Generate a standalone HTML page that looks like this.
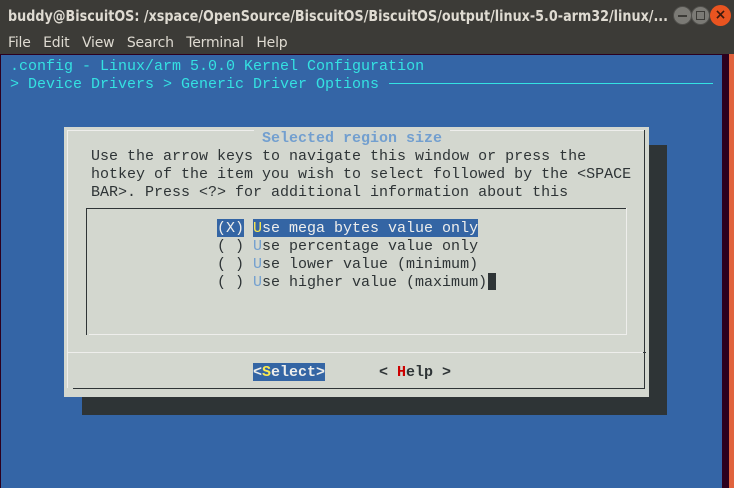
<!DOCTYPE html>
<html><head><meta charset="utf-8"><style>
*{margin:0;padding:0;box-sizing:border-box}
body{width:734px;height:488px;overflow:hidden;background:#3c3b37;position:relative;font-family:"Liberation Mono",monospace;}
.abs{position:absolute}
.t{position:absolute;font-size:15px;line-height:18px;white-space:pre;font-family:"Liberation Mono",monospace;margin-top:2px}
</style></head><body>
<div class="abs" style="left:0;top:0;width:734px;height:32px;background:#3c3b37"></div>
<svg class="abs" style="left:0;top:0" width="672" height="32"><text x="8" y="21" textLength="660" lengthAdjust="spacingAndGlyphs" font-family="DejaVu Sans, Liberation Sans, sans-serif" font-weight="bold" font-size="15" fill="#dfdbd2">buddy@BiscuitOS: /xspace/OpenSource/BiscuitOS/BiscuitOS/output/linux-5.0-arm32/linux/...</text></svg>
<div class="abs" style="left:673px;top:6px;width:19px;height:19px;border-radius:50%;background:#7b7a75;border:1px solid #4f4e4a"></div>
<div class="abs" style="left:678px;top:15px;width:9px;height:2px;background:#3c3b37"></div>
<div class="abs" style="left:691px;top:6px;width:19px;height:19px;border-radius:50%;background:#7b7a75;border:1px solid #4f4e4a"></div>
<div class="abs" style="left:696px;top:11px;width:9px;height:9px;border:1.5px solid #3c3b37"></div>
<div class="abs" style="left:710px;top:5px;width:21px;height:21px;border-radius:50%;background:#e95420;color:#3c1a0e;font:bold 14px 'DejaVu Sans',sans-serif;text-align:center;line-height:20px">×</div>
<div class="abs" style="left:8px;top:35px;font:14px 'DejaVu Sans','Liberation Sans',sans-serif;color:#dfdbd2;word-spacing:2px;letter-spacing:-0.2px;white-space:nowrap">File&nbsp; Edit&nbsp; View&nbsp; Search&nbsp; Terminal&nbsp; Help</div>
<div class="abs" style="left:0;top:54px;width:734px;height:434px;background:#2c001e"></div>
<div class="abs" style="left:1px;top:55px;width:721px;height:433px;background:#3465a6"></div>
<div class="abs" style="left:729px;top:54px;width:5px;height:434px;background:#e0633d"></div>
<div class="t" style="left:10px;top:56px;color:#34e2e2">.config - Linux/arm 5.0.0 Kernel Configuration</div>
<div class="t" style="left:10px;top:74px;color:#34e2e2">&gt; Device Drivers &gt; Generic Driver Options</div>
<div class="abs" style="left:389px;top:83px;width:324px;height:1px;background:#34e2e2"></div>
<div class="abs" style="left:82px;top:145px;width:585px;height:270px;background:#2e3436"></div>
<div class="abs" style="left:64px;top:127px;width:585px;height:270px;background:#d3d7cf"></div>
<div class="abs" style="left:67px;top:130px;width:578px;height:1px;background:#eeeeec"></div>
<div class="abs" style="left:67px;top:130px;width:1px;height:258px;background:#eeeeec"></div>
<div class="abs" style="left:644px;top:130px;width:1px;height:259px;background:#2e3436"></div>
<div class="abs" style="left:73px;top:388px;width:572px;height:1px;background:#2e3436"></div>
<div class="abs" style="left:254px;top:128px;width:196px;height:6px;background:#d3d7cf"></div>
<div class="t" style="left:262px;top:128px;color:#729fcf;font-weight:bold">Selected region size</div>
<div class="t" style="left:91px;top:146px;color:#2e3436">Use the arrow keys to navigate this window or press the
hotkey of the item you wish to select followed by the &lt;SPACE
BAR&gt;. Press &lt;?&gt; for additional information about this</div>
<div class="abs" style="left:86px;top:208px;width:540px;height:1px;background:#2e3436"></div>
<div class="abs" style="left:86px;top:208px;width:1px;height:127px;background:#2e3436"></div>
<div class="abs" style="left:626px;top:208px;width:1px;height:127px;background:#eeeeec"></div>
<div class="abs" style="left:89px;top:334px;width:538px;height:1px;background:#eeeeec"></div>
<div class="abs" style="left:217px;top:219px;width:27px;height:18px;background:#3465a4"></div>
<div class="abs" style="left:253px;top:219px;width:225px;height:18px;background:#3465a4"></div>
<div class="t" style="left:217px;top:218px;color:#eeeeec">(X) <span style="color:#fce94f">U</span>se mega bytes value only</div>
<div class="t" style="left:217px;top:236px;color:#2e3436">( ) <span style="color:#729fcf">U</span>se percentage value only
( ) <span style="color:#729fcf">U</span>se lower value (minimum)
( ) <span style="color:#729fcf">U</span>se higher value (maximum)</div>
<div class="abs" style="left:488px;top:273px;width:8px;height:17px;background:#2e3436"></div>
<div class="abs" style="left:67px;top:352px;width:578px;height:1px;background:#eeeeec"></div>
<div class="abs" style="left:643px;top:352px;width:3px;height:1px;background:#2e3436"></div>
<div class="abs" style="left:253px;top:363px;width:72px;height:18px;background:#3465a4"></div>
<div class="t" style="left:253px;top:362px;color:#eeeeec;font-weight:bold">&lt;<span style="color:#fce94f">S</span>elect&gt;</div>
<div class="t" style="left:379px;top:362px;color:#2e3436;font-weight:bold">&lt; <span style="color:#cc0000">H</span>elp &gt;</div>
</body></html>
